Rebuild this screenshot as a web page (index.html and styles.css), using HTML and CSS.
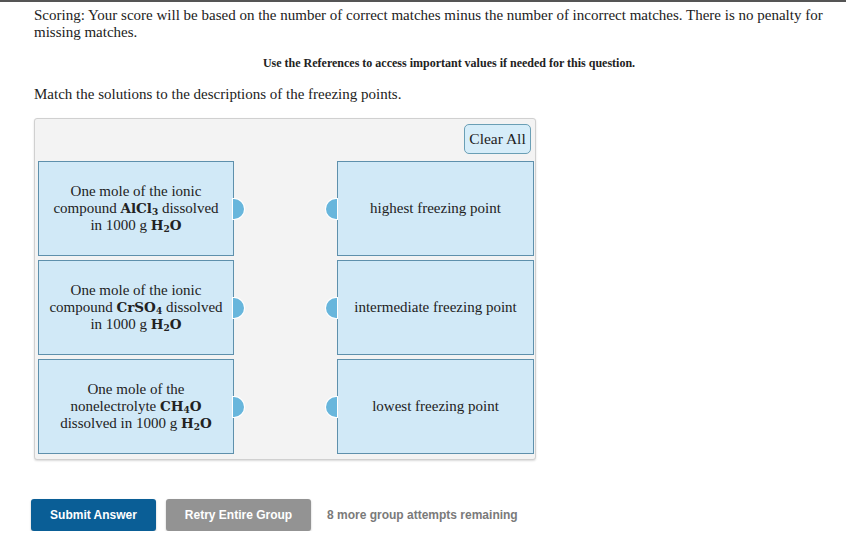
FILE: index.html
```html
<!DOCTYPE html>
<html>
<head>
<meta charset="utf-8">
<link rel="stylesheet" href="styles.css">
</head>
<body>
<div class="topbar"></div>
<div class="content">
  <p class="scoring">Scoring: Your score will be based on the number of correct matches minus the number of incorrect matches. There is no penalty for missing matches.</p>
  <p class="refs">Use the References to access important values if needed for this question.</p>
  <p class="prompt">Match the solutions to the descriptions of the freezing points.</p>
  <div class="panel">
    <div class="panel-head"><button class="clear">Clear All</button></div>
    <div class="grid">
      <div class="box left">
        <span class="txt">One mole of the ionic compound <b class="f">AlCl<sub>3</sub></b> dissolved in 1000 g <b class="f">H<sub>2</sub>O</b></span>
        <span class="dot dot-r"></span>
      </div>
      <div class="gapcol"></div>
      <div class="box right">
        <span class="dot dot-l"></span>
        <span class="txt">highest freezing point</span>
      </div>
      <div class="box left">
        <span class="txt">One mole of the ionic compound <b class="f">CrSO<sub>4</sub></b> dissolved in 1000 g <b class="f">H<sub>2</sub>O</b></span>
        <span class="dot dot-r"></span>
      </div>
      <div class="gapcol"></div>
      <div class="box right">
        <span class="dot dot-l"></span>
        <span class="txt">intermediate freezing point</span>
      </div>
      <div class="box left">
        <span class="txt">One mole of the nonelectrolyte <b class="f">CH<sub>4</sub>O</b> dissolved in 1000 g <b class="f">H<sub>2</sub>O</b></span>
        <span class="dot dot-r"></span>
      </div>
      <div class="gapcol"></div>
      <div class="box right">
        <span class="dot dot-l"></span>
        <span class="txt">lowest freezing point</span>
      </div>
    </div>
  </div>
  <div class="actions">
    <button class="btn submit">Submit Answer</button>
    <button class="btn retry">Retry Entire Group</button>
    <span class="remaining">8 more group attempts remaining</span>
  </div>
</div>
</body>
</html>
```
FILE: styles.css
```css
html, body {
  margin: 0;
  padding: 0;
  background: #fff;
}
body {
  font-family: "Liberation Serif", "Times New Roman", serif;
  color: #222;
}
.topbar {
  height: 2px;
  background: #555;
}
.content {
  padding: 5px 0 0 34px;
  width: 800px;
}
.scoring {
  margin: 0;
  font-size: 15px;
  line-height: 17px;
}
.refs {
  margin: 15px 0 0 0;
  text-align: center;
  font-size: 12px;
  line-height: 15px;
  font-weight: bold;
  width: 830px;
}
.prompt {
  margin: 15px 0 0 0;
  font-size: 15px;
  line-height: 17px;
}
.panel {
  margin-top: 15px;
  width: 502px;
  height: 342px;
  box-sizing: border-box;
  background: #f3f3f3;
  border: 1px solid #d0d0d0;
  border-radius: 3px;
  box-shadow: 0 1px 2px rgba(0,0,0,0.15);
  padding: 5px 3px 5px 3px;
}
.panel-head {
  display: flex;
  justify-content: flex-end;
  align-items: flex-start;
  height: 37px;
  padding-right: 1px;
}
.clear {
  margin: 0;
  font-family: "Liberation Serif", "Times New Roman", serif;
  font-size: 15.5px;
  color: #222;
  background: #d6edf9;
  border: 1px solid #6a9fb5;
  border-radius: 5px;
  height: 30px;
  width: 67px;
  padding: 0;
}
.grid {
  display: grid;
  grid-template-columns: 196px 103px 197px;
  grid-auto-rows: 95px;
  row-gap: 4px;
}
.box {
  position: relative;
  box-sizing: border-box;
  background: #d1e9f7;
  border: 1px solid #5e90ac;
  display: flex;
  align-items: center;
  justify-content: center;
  text-align: center;
  font-size: 15px;
  line-height: 17px;
}
.box .txt {
  padding: 0 10px;
}
.f {
  display: inline-block;
  font-family: "DejaVu Serif", "Liberation Serif", serif;
  font-size: 13.5px;
  line-height: 14px;
}
.f sub {
  font-size: 9px;
  vertical-align: baseline;
  position: relative;
  top: 2px;
}
.dot {
  position: absolute;
  top: 50%;
  width: 11px;
  height: 20px;
  margin-top: -10px;
  background: #68b6dc;
  box-shadow: 0 0 0 1px #fff;
}
.dot-r {
  left: 100%;
  margin-left: 0;
  border-radius: 0 10px 10px 0;
}
.dot-l {
  right: 100%;
  margin-right: 1px;
  border-radius: 10px 0 0 10px;
}
.actions {
  display: flex;
  align-items: center;
  margin-top: 39px;
  margin-left: -3px;
}
.btn {
  margin: 0;
  font-family: "Liberation Sans", Arial, sans-serif;
  font-weight: bold;
  font-size: 12px;
  color: #fff;
  border: none;
  border-radius: 3px;
  height: 32px;
  box-shadow: 0 1px 2px rgba(0,0,0,0.25);
}
.submit {
  background: #0a5e96;
  width: 125px;
}
.retry {
  background: #939393;
  width: 145px;
  margin-left: 10px;
}
.remaining {
  font-family: "Liberation Sans", Arial, sans-serif;
  font-weight: bold;
  font-size: 12px;
  color: #7a7a7a;
  margin-left: 16px;
}
```
